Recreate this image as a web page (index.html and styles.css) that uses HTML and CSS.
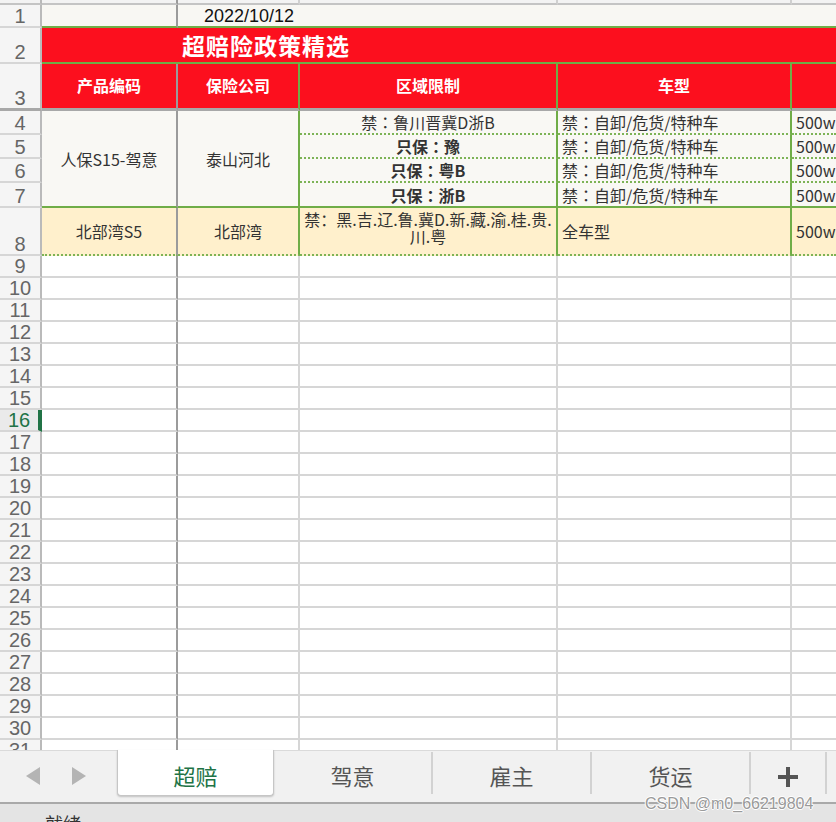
FILE: index.html
```html
<!DOCTYPE html>
<html lang="zh-CN">
<head>
    <meta charset="UTF-8">
    <meta name="viewport" content="width=device-width, initial-scale=1.0">
    <title>超赔险政策精选</title>
    <link rel="stylesheet" href="styles.css">
</head>
<body>
    <div class="sheet">
        <!-- 列标题（被滚动遮住，只露出一条） -->
        <div class="colhead corner"></div>
        <div class="colhead fz"></div>
        <div class="colhead"></div>
        <div class="colhead"></div>
        <div class="colhead"></div>
        <div class="colhead last"></div>

        <!-- 1 -->
        <div class="rh">1</div>
        <div class="cell row1 fz"></div>
        <div class="cell row1 date">2022/10/12</div>
        <div class="cell row1 span3"></div>

        <!-- 2 -->
        <div class="rh">2</div>
        <div class="cell title">超赔险政策精选</div>

        <!-- 3 -->
        <div class="rh frozen-row">3</div>
        <div class="cell head fz">产品编码</div>
        <div class="cell head">保险公司</div>
        <div class="cell head">区域限制</div>
        <div class="cell head">车型</div>
        <div class="cell head last"></div>

        <!-- 4-7 -->
        <div class="rh">4</div>
        <div class="cell grp merged fz">人保S15-驾意</div>
        <div class="cell grp merged green-r">泰山河北</div>
        <div class="cell grp dot center">禁<span class="colon">：</span>鲁川晋冀D浙B</div>
        <div class="cell grp dot left">禁<span class="colon">：</span>自卸/危货/特种车</div>
        <div class="cell grp dot left last">500w</div>

        <div class="rh">5</div>
        <div class="cell grp dot center bold">只保<span class="colon">：</span>豫</div>
        <div class="cell grp dot left">禁<span class="colon">：</span>自卸/危货/特种车</div>
        <div class="cell grp dot left last">500w</div>

        <div class="rh">6</div>
        <div class="cell grp dot center bold">只保<span class="colon">：</span>粤B</div>
        <div class="cell grp dot left">禁<span class="colon">：</span>自卸/危货/特种车</div>
        <div class="cell grp dot left last">500w</div>

        <div class="rh">7</div>
        <div class="cell grp solid center bold">只保<span class="colon">：</span>浙B</div>
        <div class="cell grp solid left">禁<span class="colon">：</span>自卸/危货/特种车</div>
        <div class="cell grp solid left last">500w</div>

        <!-- 8 -->
        <div class="rh">8</div>
        <div class="cell bbw center fz">北部湾S5</div>
        <div class="cell bbw center green-r">北部湾</div>
        <div class="cell bbw center wrap"><span>禁<span class="colon">：</span>黑.吉.辽.鲁.冀D.新.藏.渝.桂.贵.川.粤</span></div>
        <div class="cell bbw left">全车型</div>
        <div class="cell bbw left last">500w</div>

        <!-- 空行 -->
        <div class="rh">9</div><div class="cell fz"></div><div class="cell"></div><div class="cell"></div><div class="cell"></div><div class="cell last"></div>
        <div class="rh">10</div><div class="cell fz"></div><div class="cell"></div><div class="cell"></div><div class="cell"></div><div class="cell last"></div>
        <div class="rh">11</div><div class="cell fz"></div><div class="cell"></div><div class="cell"></div><div class="cell"></div><div class="cell last"></div>
        <div class="rh">12</div><div class="cell fz"></div><div class="cell"></div><div class="cell"></div><div class="cell"></div><div class="cell last"></div>
        <div class="rh">13</div><div class="cell fz"></div><div class="cell"></div><div class="cell"></div><div class="cell"></div><div class="cell last"></div>
        <div class="rh">14</div><div class="cell fz"></div><div class="cell"></div><div class="cell"></div><div class="cell"></div><div class="cell last"></div>
        <div class="rh">15</div><div class="cell fz"></div><div class="cell"></div><div class="cell"></div><div class="cell"></div><div class="cell last"></div>
        <div class="rh selected">16</div><div class="cell fz"></div><div class="cell"></div><div class="cell"></div><div class="cell"></div><div class="cell last"></div>
        <div class="rh">17</div><div class="cell fz"></div><div class="cell"></div><div class="cell"></div><div class="cell"></div><div class="cell last"></div>
        <div class="rh">18</div><div class="cell fz"></div><div class="cell"></div><div class="cell"></div><div class="cell"></div><div class="cell last"></div>
        <div class="rh">19</div><div class="cell fz"></div><div class="cell"></div><div class="cell"></div><div class="cell"></div><div class="cell last"></div>
        <div class="rh">20</div><div class="cell fz"></div><div class="cell"></div><div class="cell"></div><div class="cell"></div><div class="cell last"></div>
        <div class="rh">21</div><div class="cell fz"></div><div class="cell"></div><div class="cell"></div><div class="cell"></div><div class="cell last"></div>
        <div class="rh">22</div><div class="cell fz"></div><div class="cell"></div><div class="cell"></div><div class="cell"></div><div class="cell last"></div>
        <div class="rh">23</div><div class="cell fz"></div><div class="cell"></div><div class="cell"></div><div class="cell"></div><div class="cell last"></div>
        <div class="rh">24</div><div class="cell fz"></div><div class="cell"></div><div class="cell"></div><div class="cell"></div><div class="cell last"></div>
        <div class="rh">25</div><div class="cell fz"></div><div class="cell"></div><div class="cell"></div><div class="cell"></div><div class="cell last"></div>
        <div class="rh">26</div><div class="cell fz"></div><div class="cell"></div><div class="cell"></div><div class="cell"></div><div class="cell last"></div>
        <div class="rh">27</div><div class="cell fz"></div><div class="cell"></div><div class="cell"></div><div class="cell"></div><div class="cell last"></div>
        <div class="rh">28</div><div class="cell fz"></div><div class="cell"></div><div class="cell"></div><div class="cell"></div><div class="cell last"></div>
        <div class="rh">29</div><div class="cell fz"></div><div class="cell"></div><div class="cell"></div><div class="cell"></div><div class="cell last"></div>
        <div class="rh">30</div><div class="cell fz"></div><div class="cell"></div><div class="cell"></div><div class="cell"></div><div class="cell last"></div>
        <div class="rh">31</div><div class="cell fz"></div><div class="cell"></div><div class="cell"></div><div class="cell"></div><div class="cell last"></div>
    </div>

    <div class="tabbar">
        <div class="tab-nav">
            <span class="arrow arrow-left"></span>
            <span class="arrow arrow-right"></span>
        </div>
        <div class="tab active">超赔</div>
        <div class="tab">驾意</div>
        <div class="tab">雇主</div>
        <div class="tab">货运</div>
        <div class="tab add">
            <svg width="20" height="20" viewBox="0 0 20 20">
                <rect x="8" y="0" width="4" height="20" fill="#555"/>
                <rect x="0" y="8" width="20" height="4" fill="#555"/>
            </svg>
        </div>
    </div>

    <div class="statusbar">就绪</div>

    <div class="watermark">CSDN @m0_66219804</div>
</body>
</html>
```

FILE: styles.css
```css
* {
    box-sizing: border-box;
}

body {
    margin: 0;
    width: 836px;
    height: 822px;
    overflow: hidden;
    position: relative;
    background: #FFFFFF;
    font-family: "Noto Sans CJK SC", "Liberation Sans", sans-serif;
    color: #333333;
}

/* 表格区域 */
.sheet {
    height: 750px;
    overflow: hidden;
    display: grid;
    grid-template-columns: 42px 136px 122px 258px 234px 44px;
    grid-template-rows: 5px 23px 36px 47px 24px 24px 24px 25px 48px repeat(23, 22px);
}

.colhead {
    background: #F3F3F3;
    border-right: 2px solid #D0D0D0;
    border-bottom: 2px solid #C4C4C4;
}

.colhead.corner {
    border-right-color: #B9B9B9;
}

.colhead.fz {
    border-right-color: #9B9B9B;
}

.colhead.last {
    border-right: 0;
}

.rh {
    background: #F5F5F5;
    border-right: 2px solid #BABABA;
    border-bottom: 2px solid #D6D6D6;
    display: flex;
    justify-content: center;
    align-items: flex-end;
    font-family: "Liberation Sans", sans-serif;
    font-size: 20px;
    line-height: 20px;
    color: #666666;
    overflow: hidden;
}

.rh.frozen-row {
    border-bottom: 3px solid #A8A8A8;
}

.rh.selected {
    background: #EAEAEA;
    color: #217346;
    border-right: 4px solid #217346;
}

.cell {
    border-right: 2px solid #D6D6D6;
    border-bottom: 2px solid #D6D6D6;
    display: flex;
    align-items: center;
    font-size: 16px;
    line-height: 20px;
    white-space: nowrap;
    overflow: hidden;
}

.cell.fz {
    border-right-color: #9B9B9B;
}

.cell.last {
    border-right: 0;
}

/* 全角冒号居中 */
.colon {
    font-family: "Noto Sans CJK TC", "Noto Sans CJK SC", sans-serif;
}

/* 第1行 */
.row1 {
    background: #F8F7F3;
    border-bottom-color: #70AD47;
}

.row1.date {
    border-right: 0;
    justify-content: flex-end;
    padding-right: 6px;
    font-family: "Liberation Sans", sans-serif;
    font-size: 18px;
    color: #111111;
}

.row1.span3 {
    grid-column: span 3;
    border-right: 0;
}

/* 标题 */
.title {
    grid-column: span 5;
    background: #FC0F1E;
    border-right: 0;
    border-bottom-color: #70AD47;
    padding-left: 140px;
    color: #FFFFFF;
    font-size: 23px;
    font-weight: bold;
    letter-spacing: 1px;
}

/* 表头 */
.head {
    background: #FC0F1E;
    border-right-color: #70AD47;
    border-bottom: 3px solid #A8A8A8;
    justify-content: center;
    padding-bottom: 2px;
    color: #FFFFFF;
    font-size: 16px;
    font-weight: bold;
}

.head.fz {
    border-right-color: #9B9B9B;
}

/* 人保 / 泰山河北 */
.grp {
    background: #F9F8F4;
    border-right-color: #70AD47;
}

.grp.merged {
    grid-row: span 4;
    justify-content: center;
    border-bottom-color: #70AD47;
}

.grp.fz {
    border-right-color: #9B9B9B;
}

.dot {
    border-bottom: 2px dotted #7DB356;
}

.solid {
    border-bottom-color: #70AD47;
}

.center {
    justify-content: center;
    text-align: center;
}

.left {
    padding-left: 4px;
}

.bold {
    font-weight: bold;
}

.green-r {
    border-right-color: #70AD47;
}

/* 北部湾 */
.bbw {
    background: #FFF0CC;
    border-right-color: #70AD47;
    border-bottom: 2px dotted #7DB356;
}

.bbw.fz {
    border-right-color: #9B9B9B;
}

.bbw.wrap {
    white-space: normal;
    line-height: 17px;
    padding: 0 3px 6px;
}

/* 工作表标签 */
.tabbar {
    height: 54px;
    background: #F1F1F1;
    border-top: 1px solid #DADADA;
    border-bottom: 2px solid #A9A9A9;
    display: flex;
    align-items: flex-start;
}

.tab-nav {
    width: 117px;
    display: flex;
    align-items: center;
    gap: 32px;
    padding: 16px 0 0 26px;
}

.arrow {
    width: 0;
    height: 0;
    border-top: 9px solid transparent;
    border-bottom: 9px solid transparent;
}

.arrow-left {
    border-right: 14px solid #B4B4B4;
}

.arrow-right {
    border-left: 14px solid #B4B4B4;
}

.tab {
    width: 159px;
    height: 42px;
    margin-top: 1px;
    padding-top: 10px;
    border-right: 2px solid #D2D2D2;
    text-align: center;
    font-size: 22px;
    line-height: 26px;
    color: #555555;
}

.tab.active {
    width: 157px;
    height: 46px;
    margin-top: -1px;
    padding-top: 12px;
    background: #FFFFFF;
    border: 1px solid #C6C6C6;
    border-top: 0;
    border-radius: 0 0 4px 4px;
    box-shadow: 0 1px 2px rgba(0, 0, 0, 0.2);
    color: #217346;
}

.tab.add {
    width: 76px;
    padding-top: 15px;
}

.tab.add svg {
    display: block;
    margin: 0 auto;
}

.statusbar {
    height: 18px;
    background: #E4E4E4;
    padding: 10px 0 0 45px;
    font-size: 18px;
    line-height: 18px;
    color: #333333;
    overflow: hidden;
}

.watermark {
    position: absolute;
    left: 645px;
    top: 795px;
    font-family: "Liberation Sans", sans-serif;
    font-size: 16px;
    color: #9A9A9A;
    text-shadow: 1px 0 #FFFFFF, -1px 0 #FFFFFF, 0 1px #FFFFFF, 0 -1px #FFFFFF;
    white-space: nowrap;
}
```
